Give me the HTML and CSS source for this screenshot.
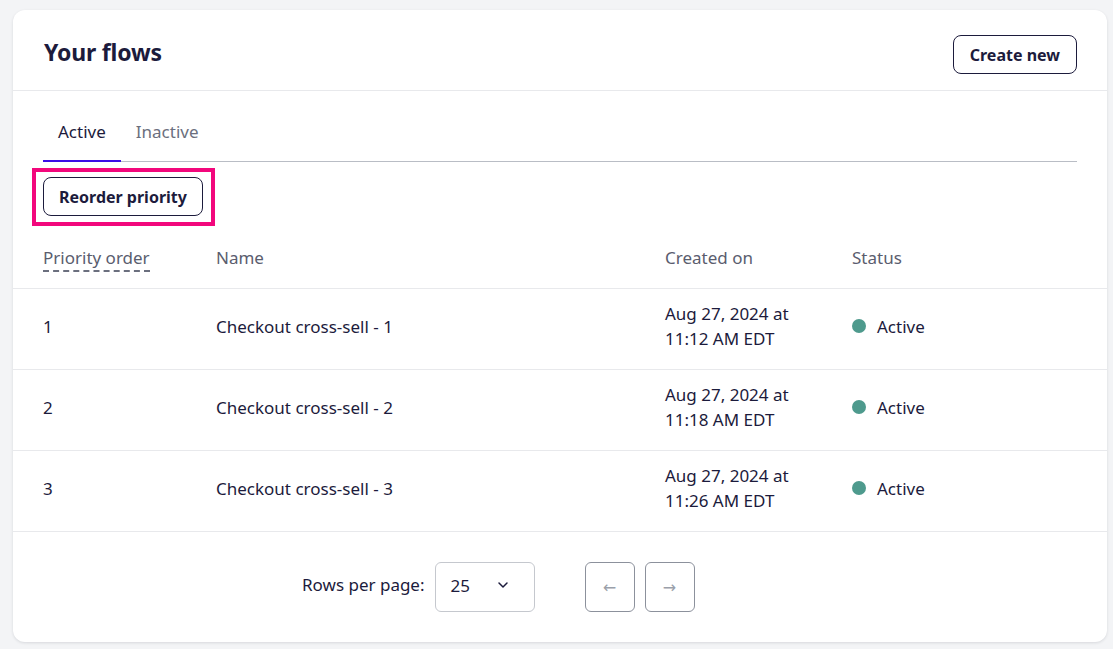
FILE: index.html
```html
<!DOCTYPE html>
<html lang="en">
<head>
<meta charset="UTF-8">
<meta name="viewport" content="width=device-width, initial-scale=1.0">
<title>Your flows</title>
<link rel="stylesheet" href="styles.css">
</head>
<body>

<div class="card">
  <!-- title bar -->
  <div class="card-header">
    <h1>Your flows</h1>
    <button class="btn btn-create">Create new</button>
  </div>

  <!-- tabs -->
  <div class="tabs">
    <span class="tab active">Active</span>
    <span class="tab">Inactive</span>
  </div>

  <div class="toolbar">
    <div class="marked">
      <button class="btn">Reorder priority</button>
    </div>
  </div>

  <!-- flows list -->
  <div class="flows">
    <div class="row head">
      <div><span class="hint">Priority order</span></div>
      <div>Name</div>
      <div>Created on</div>
      <div>Status</div>
    </div>
    <div class="row">
      <div>1</div>
      <div>Checkout cross-sell - 1</div>
      <div>Aug 27, 2024 at<br>11:12 AM EDT</div>
      <div class="status"><span class="dot"></span>Active</div>
    </div>
    <div class="row">
      <div>2</div>
      <div>Checkout cross-sell - 2</div>
      <div>Aug 27, 2024 at<br>11:18 AM EDT</div>
      <div class="status"><span class="dot"></span>Active</div>
    </div>
    <div class="row">
      <div>3</div>
      <div>Checkout cross-sell - 3</div>
      <div>Aug 27, 2024 at<br>11:26 AM EDT</div>
      <div class="status"><span class="dot"></span>Active</div>
    </div>
  </div>

  <!-- paging -->
  <div class="pager">
    <span class="pager-label">Rows per page:</span>
    <div class="select">
      <span>25</span>
      <svg width="12" height="8" viewBox="0 0 12 8"><path d="M2 2l4 4 4-4" fill="none" stroke="#1c1b3c" stroke-width="1.5" stroke-linecap="round" stroke-linejoin="round"/></svg>
    </div>
    <div class="pager-nav">
      <button class="arrow">&larr;</button>
      <button class="arrow">&rarr;</button>
    </div>
  </div>
</div>

</body>
</html>
```

FILE: styles.css
```css
body {
  margin: 0;
  background: #f3f4f6;
  font-family: "Noto Sans", sans-serif;
  color: #1c1b3c;
  font-size: 17px;
}

.card {
  margin: 10px 6px 8px 13px;
  background: #fff;
  border-radius: 12px;
  box-shadow: 0 1px 3px rgba(20, 24, 40, 0.12);
}

/* title bar */
.card-header {
  height: 80px;
  padding: 0 30px 0 31px;
  display: flex;
  align-items: center;
  justify-content: space-between;
  border-bottom: 1px solid #e8e9ec;
}

.card-header h1 {
  margin: 0 0 -3px;
  font-size: 23px;
  font-weight: 700;
  letter-spacing: -0.2px;
}

.btn {
  font-family: inherit;
  font-size: 16px;
  font-weight: 700;
  color: #1c1b3c;
  background: #fff;
  border: 1px solid #1c1b3c;
  border-radius: 8px;
  height: 39px;
  padding: 0 15px;
  cursor: pointer;
}

.btn-create {
  margin-top: 9px;
  padding: 0 16px;
}

/* tabs */
.tabs {
  margin: 29px 30px 0;
  display: flex;
  border-bottom: 1px solid #b9bdc5;
}

.tab {
  padding: 0 15px 16px;
  line-height: 24px;
  color: #6b6f7e;
  border-bottom: 2px solid transparent;
  margin-bottom: -1px;
}

.tab.active {
  color: #1c1b3c;
  border-bottom-color: #3b0ee6;
}

.toolbar {
  padding: 15px 30px 0;
}

/* highlight frame round the reorder button */
.marked {
  display: inline-block;
  margin: -9px -12px -10px -11px;
  padding: 5px 8px 6px 7px;
  border: 4px solid #f2077c;
}

.marked .btn {
  display: block;
}

/* rows */
.flows {
  margin-top: 20px;
}

.row {
  display: grid;
  grid-template-columns: 173px 449px 187px 1fr;
  align-items: center;
  padding: 12px 30px 18px;
  min-height: 50px;
  line-height: 25px;
  border-bottom: 1px solid #e8e9ec;
}

.row.head {
  color: #5a5d6e;
  min-height: 0;
  padding: 9px 30px 18px;
}

.hint {
  border-bottom: 2px dashed #6b6f7e;
  padding-bottom: 1px;
}

.status {
  display: flex;
  align-items: center;
}

.dot {
  width: 14px;
  height: 14px;
  border-radius: 50%;
  background: #4e9a8d;
  margin-right: 11px;
}

/* paging */
.pager {
  display: flex;
  align-items: center;
  padding: 30px 0 30px 289px;
}

.pager-label {
  margin-right: 10px;
  padding-bottom: 5px;
}

.select {
  width: 100px;
  height: 50px;
  box-sizing: border-box;
  border: 1px solid #c5c8ce;
  border-radius: 6px;
  display: flex;
  align-items: center;
  justify-content: space-between;
  padding: 0 25px 4px 15px;
}

.pager-nav {
  display: flex;
  gap: 10px;
  margin-left: 50px;
}

.arrow {
  width: 50px;
  height: 50px;
  background: #fff;
  border: 1px solid #8c919c;
  border-radius: 6px;
  color: #9aa0aa;
  font-size: 16px;
  font-family: "DejaVu Sans", sans-serif;
}
```
